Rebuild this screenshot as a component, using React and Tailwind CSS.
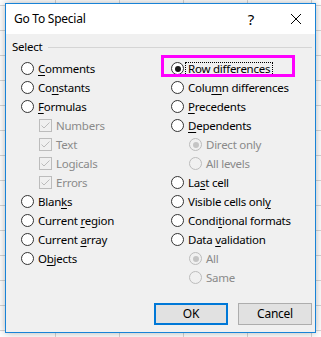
const font = { fontFamily: '"Segoe UI", "Noto Sans", "Open Sans", sans-serif' }

function Radio({ checked, disabled }) {
  return (
    <span
      className={
        'flex h-[13px] w-[13px] shrink-0 items-center justify-center rounded-full border ' +
        (disabled ? 'border-[#bcbcbc] bg-[#f0f0f0]' : 'border-[#333333] bg-white')
      }
    >
      {checked ? (
        <span
          className={
            'h-[6px] w-[6px] rounded-full ' + (disabled ? 'bg-[#c4c4c4]' : 'bg-[#1a1a1a]')
          }
        />
      ) : null}
    </span>
  )
}

function Check() {
  return (
    <span className="flex h-[13px] w-[13px] shrink-0 items-center justify-center border border-[#bcbcbc]">
      <svg width="11" height="11" viewBox="0 0 11 11">
        <path d="M1.5 5.5 L4 8 L9.5 2.5" fill="none" stroke="#bcbcbc" strokeWidth="1" />
      </svg>
    </span>
  )
}

// label with one underlined access key
function Label({ text, k, disabled }) {
  const i = k == null ? -1 : k
  return (
    <span className={'whitespace-nowrap ' + (disabled ? 'text-[#8a8a8a]' : 'text-black')}>
      {i < 0 ? (
        text
      ) : (
        <>
          {text.slice(0, i)}
          <span className="underline underline-offset-[2px]">{text[i]}</span>
          {text.slice(i + 1)}
        </>
      )}
    </span>
  )
}

function Row({ children, indent }) {
  return (
    <div className={'flex h-[19px] items-center gap-[4px] ' + (indent ? 'pl-[18px]' : '')}>
      {children}
    </div>
  )
}

const left = [
  { t: 'Comments', k: 0 },
  { t: 'Constants', k: 2 },
  { t: 'Formulas', k: 0 },
  { t: 'Numbers', check: true },
  { t: 'Text', check: true },
  { t: 'Logicals', check: true },
  { t: 'Errors', check: true },
  { t: 'Blanks', k: 4 },
  { t: 'Current region', k: 8 },
  { t: 'Current array', k: 8 },
  { t: 'Objects', k: 1 },
]

const right = [
  { t: 'Row differences', k: 2, checked: true, focus: true },
  { t: 'Column differences', k: 4 },
  { t: 'Precedents', k: 0 },
  { t: 'Dependents', k: 0 },
  { t: 'Direct only', sub: true, checked: true },
  { t: 'All levels', sub: true },
  { t: 'Last cell', k: 2 },
  { t: 'Visible cells only', k: 17 },
  { t: 'Conditional formats', k: 5 },
  { t: 'Data validation', k: 5 },
  { t: 'All', sub: true, checked: true },
  { t: 'Same', sub: true },
]

export default function App() {
  return (
    <div
      className="relative h-[337px] w-[321px] overflow-hidden bg-white bg-[linear-gradient(to_right,#d6d6d6_1px,transparent_1px),linear-gradient(to_bottom,#d6d6d6_1px,transparent_1px)] bg-[length:64px_25px] bg-[position:55px_5px] pl-[5px] pt-[3px] text-[11.5px] tracking-[-0.25px]"
      style={font}
    >
      <div className="flex h-[330px] w-[311px] flex-col border border-[#1883d7] bg-[#f0f0f0] shadow-[0_0_8px_rgba(0,0,0,0.3)]">
        {/* title bar */}
        <div className="flex h-[30px] items-center bg-white pl-[8px] pr-[14px]">
          <span className="text-[12px] text-black">Go To Special</span>
          <span className="ml-auto mr-[37px] text-[15px] leading-none text-black">?</span>
          <svg width="10" height="10" viewBox="0 0 10 10">
            <path d="M0 0 L10 10 M10 0 L0 10" stroke="#000" strokeWidth="1" />
          </svg>
        </div>

        {/* group label */}
        <div className="mt-[5px] flex h-[16px] items-center gap-[6px] pl-[6px] pr-[3px]">
          <span className="text-black">Select</span>
          <span className="h-px flex-1 bg-[#d5d5d5]" />
        </div>

        <div className="mt-[4px] flex pl-[15px]">
          <div className="w-[150px]">
            {left.map((r) => (
              <Row key={r.t} indent={r.check}>
                {r.check ? <Check /> : <Radio />}
                <Label text={r.t} k={r.k} disabled={r.check} />
              </Row>
            ))}
          </div>
          <div className="flex-1">
            {right.map((r) => (
              <Row key={r.t} indent={r.sub}>
                <Radio checked={r.checked} disabled={r.sub} />
                {r.focus ? (
                  <span className="-ml-[3px] border border-dotted border-black px-[2px] leading-[12px]">
                    <Label text={r.t} k={r.k} />
                  </span>
                ) : (
                  <Label text={r.t} k={r.sub ? null : r.k} disabled={r.sub} />
                )}
              </Row>
            ))}
          </div>
        </div>

        <div className="mt-auto flex justify-end gap-[10px] pb-[7px] pr-[3px]">
          <button className="h-[22px] w-[74px] border-2 border-[#0078d7] bg-[#e1e1e1] text-[12px] text-black">
            OK
          </button>
          <button className="h-[22px] w-[74px] border border-[#adadad] bg-[#e1e1e1] text-[12px] text-black">
            Cancel
          </button>
        </div>
      </div>

      {/* magenta highlight annotation */}
      <div className="absolute left-[161px] top-[55px] h-[22px] w-[134px] border-[3px] border-[#ff00ff]" />
    </div>
  )
}
